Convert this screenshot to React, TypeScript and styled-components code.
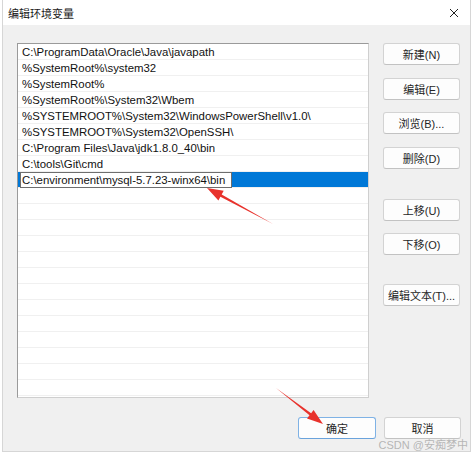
import React from "react";
import styled, { createGlobalStyle } from "styled-components";

const Global = createGlobalStyle`
  html, body { margin: 0; padding: 0; background: #ffffff; }
  body { font-family: "Liberation Sans", "Noto Sans CJK SC", sans-serif; }
  * { box-sizing: border-box; }
`;

const FONT = `"Liberation Sans", "Noto Sans CJK SC", sans-serif`;

const Stage = styled.div`
  position: relative;
  width: 474px;
  height: 455px;
  overflow: hidden;
  background: #ffffff;
`;

const Window = styled.div`
  margin-left: 2px;
  width: 469px;
  height: 452px;
  border: 1px solid #d6d6d6;
  border-top: none;
  background: #f0f0f0;
  display: flex;
  flex-direction: column;
`;

const TitleBar = styled.div`
  height: 25px;
  background: #ffffff;
  display: flex;
  align-items: center;
  justify-content: space-between;
  padding: 0 8px 0 5px;
  font-family: ${FONT};
  font-size: 11px;
  color: #1a1a1a;
`;

const CloseIcon = styled.svg`
  width: 10px;
  height: 10px;
  margin-right: 3px;
`;

const Body = styled.div`
  flex: 1;
  display: flex;
  flex-direction: column;
  padding: 18px 9px 11px 14px;
`;

const Main = styled.div`
  display: flex;
  gap: 14px;
`;

const List = styled.div`
  width: 352px;
  height: 355px;
  background: #ffffff;
  border: 1px solid #9a9a9a;
  border-right-color: #cfcfcf;
  border-bottom-color: #cfcfcf;
  overflow: hidden;
  font-family: ${FONT};
  font-size: 11.4px;
  color: #111;
`;

const Row = styled.div<{ $selected?: boolean }>`
  height: 16px;
  border-bottom: 1px solid #f0f0f0;
  display: flex;
  align-items: center;
  padding-left: ${(p) => (p.$selected ? "2px" : "4px")};
  background: ${(p) => (p.$selected ? "#0078d7" : "#ffffff")};
  white-space: nowrap;
`;

const Editor = styled.span`
  height: 16px;
  background: #ffffff;
  border: 1px solid #6e6e6e;
  padding: 0 6px 0 1px;
  display: flex;
  align-items: center;
`;

const ButtonCol = styled.div`
  display: flex;
  flex-direction: column;
  width: 77px;
`;

const Btn = styled.button<{ $gap?: number; $default?: boolean; $w?: number }>`
  width: ${(p) => p.$w ?? 77}px;
  height: 22px;
  margin-top: ${(p) => p.$gap ?? 0}px;
  background: #fdfdfd;
  border: 1px solid ${(p) => (p.$default ? "#7fb2e5" : "#d3d3d3")};
  border-bottom-color: ${(p) => (p.$default ? "#6aa3dc" : "#c2c2c2")};
  border-radius: 3px;
  font-family: ${FONT};
  font-size: 11px;
  color: #262626;
  padding: 0;
  display: flex;
  align-items: center;
  justify-content: center;
`;

const Footer = styled.div`
  display: flex;
  justify-content: flex-end;
  gap: 8px;
  margin-top: 19px;
`;

const Overlay = styled.svg`
  position: absolute;
  left: 0;
  top: 0;
  pointer-events: none;
`;

const Watermark = styled.div`
  position: absolute;
  right: 6px;
  bottom: 3px;
  font-family: ${FONT};
  font-size: 11px;
  color: rgba(170, 170, 170, 0.85);
`;

const entries = [
  "C:\\ProgramData\\Oracle\\Java\\javapath",
  "%SystemRoot%\\system32",
  "%SystemRoot%",
  "%SystemRoot%\\System32\\Wbem",
  "%SYSTEMROOT%\\System32\\WindowsPowerShell\\v1.0\\",
  "%SYSTEMROOT%\\System32\\OpenSSH\\",
  "C:\\Program Files\\Java\\jdk1.8.0_40\\bin",
  "C:\\tools\\Git\\cmd",
];

function arrowPoints(tx: number, ty: number, hx: number, hy: number) {
  const dx = hx - tx;
  const dy = hy - ty;
  const len = Math.hypot(dx, dy);
  const ux = dx / len;
  const uy = dy / len;
  const nx = -uy;
  const ny = ux;
  const headLen = 16;
  const headW = 5.5;
  const shaftW = 2.2;
  const bx = hx - ux * headLen;
  const by = hy - uy * headLen;
  const pts = [
    [tx, ty],
    [bx + nx * shaftW * 0.6, by + ny * shaftW * 0.6],
    [bx + nx * headW, by + ny * headW],
    [hx, hy],
    [bx - nx * headW, by - ny * headW],
    [bx - nx * shaftW * 0.6, by - ny * shaftW * 0.6],
  ];
  return pts.map((p) => p.map((v) => v.toFixed(1)).join(",")).join(" ");
}

export default function App() {
  const empties = Array.from({ length: 14 });
  return (
    <>
      <Global />
      <Stage>
        <Window>
          <TitleBar>
            <span>编辑环境变量</span>
            <CloseIcon viewBox="0 0 10 10">
              <path d="M1 1 L9 9 M9 1 L1 9" stroke="#222" strokeWidth="1" />
            </CloseIcon>
          </TitleBar>
          <Body>
            <Main>
              <List>
                {entries.map((e) => (
                  <Row key={e}>{e}</Row>
                ))}
                <Row $selected>
                  <Editor>C:\environment\mysql-5.7.23-winx64\bin</Editor>
                </Row>
                {empties.map((_, i) => (
                  <Row key={"e" + i} />
                ))}
              </List>
              <ButtonCol>
                <Btn>新建(N)</Btn>
                <Btn $gap={13}>编辑(E)</Btn>
                <Btn $gap={12}>浏览(B)...</Btn>
                <Btn $gap={13}>删除(D)</Btn>
                <Btn $gap={30}>上移(U)</Btn>
                <Btn $gap={12}>下移(O)</Btn>
                <Btn $gap={29}>编辑文本(T)...</Btn>
              </ButtonCol>
            </Main>
            <Footer>
              <Btn $default $w={78}>确定</Btn>
              <Btn>取消</Btn>
            </Footer>
          </Body>
        </Window>
        <Overlay width="474" height="455" viewBox="0 0 474 455">
          <polygon points={arrowPoints(273, 224, 207, 188)} fill="#e8322c" />
          <polygon points={arrowPoints(276, 388, 323, 424)} fill="#e8322c" />
        </Overlay>
        <Watermark>CSDN @安痴梦中</Watermark>
      </Stage>
    </>
  );
}
